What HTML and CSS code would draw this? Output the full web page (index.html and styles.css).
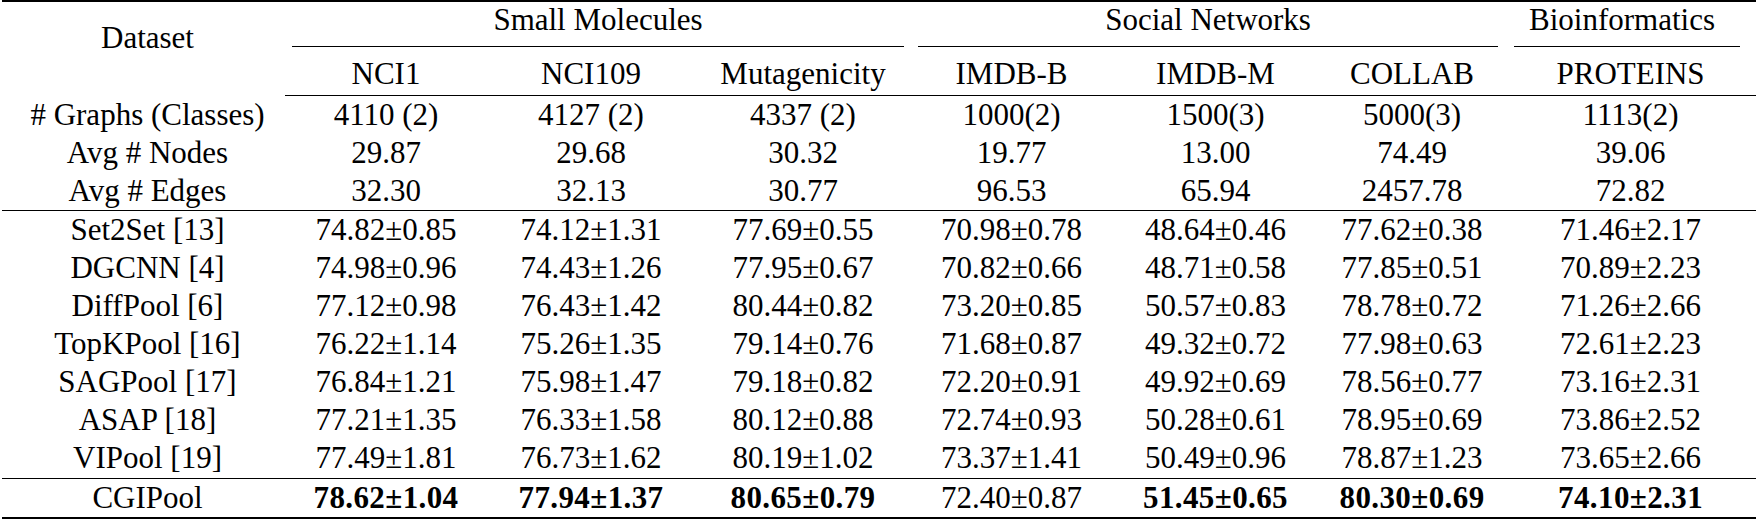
FILE: index.html
```html
<!DOCTYPE html>
<html>
<head>
<meta charset="utf-8">
<link rel="stylesheet" href="styles.css">
</head>
<body>
<table class="tbl">
  <colgroup>
    <col class="c0"><col class="c1"><col class="c2"><col class="c3"><col class="c4"><col class="c5"><col class="c6"><col class="c7">
  </colgroup>
  <tr class="h1">
    <td rowspan="2" class="ds">Dataset</td>
    <td colspan="3"><div class="grp">Small Molecules</div></td>
    <td colspan="3"><div class="grp">Social Networks</div></td>
    <td><div class="grp bio">Bioinformatics</div></td>
  </tr>
  <tr class="h2">
    <td>NCI1</td><td>NCI109</td><td>Mutagenicity</td><td>IMDB-B</td><td>IMDB-M</td><td>COLLAB</td><td>PROTEINS</td>
  </tr>
  <tr class="r">
    <td class="name">#&nbsp;Graphs (Classes)</td><td>4110 (2)</td><td>4127 (2)</td><td>4337 (2)</td><td>1000(2)</td><td>1500(3)</td><td>5000(3)</td><td>1113(2)</td>
  </tr>
  <tr class="r">
    <td class="name">Avg # Nodes</td><td>29.87</td><td>29.68</td><td>30.32</td><td>19.77</td><td>13.00</td><td>74.49</td><td>39.06</td>
  </tr>
  <tr class="r rule">
    <td class="name">Avg # Edges</td><td>32.30</td><td>32.13</td><td>30.77</td><td>96.53</td><td>65.94</td><td>2457.78</td><td>72.82</td>
  </tr>
  <tr class="r">
    <td class="name">Set2Set [13]</td><td>74.82±0.85</td><td>74.12±1.31</td><td>77.69±0.55</td><td>70.98±0.78</td><td>48.64±0.46</td><td>77.62±0.38</td><td>71.46±2.17</td>
  </tr>
  <tr class="r">
    <td class="name">DGCNN [4]</td><td>74.98±0.96</td><td>74.43±1.26</td><td>77.95±0.67</td><td>70.82±0.66</td><td>48.71±0.58</td><td>77.85±0.51</td><td>70.89±2.23</td>
  </tr>
  <tr class="r">
    <td class="name">DiffPool [6]</td><td>77.12±0.98</td><td>76.43±1.42</td><td>80.44±0.82</td><td>73.20±0.85</td><td>50.57±0.83</td><td>78.78±0.72</td><td>71.26±2.66</td>
  </tr>
  <tr class="r">
    <td class="name">TopKPool [16]</td><td>76.22±1.14</td><td>75.26±1.35</td><td>79.14±0.76</td><td>71.68±0.87</td><td>49.32±0.72</td><td>77.98±0.63</td><td>72.61±2.23</td>
  </tr>
  <tr class="r">
    <td class="name">SAGPool [17]</td><td>76.84±1.21</td><td>75.98±1.47</td><td>79.18±0.82</td><td>72.20±0.91</td><td>49.92±0.69</td><td>78.56±0.77</td><td>73.16±2.31</td>
  </tr>
  <tr class="r">
    <td class="name">ASAP [18]</td><td>77.21±1.35</td><td>76.33±1.58</td><td>80.12±0.88</td><td>72.74±0.93</td><td>50.28±0.61</td><td>78.95±0.69</td><td>73.86±2.52</td>
  </tr>
  <tr class="r rule tall">
    <td class="name">VIPool [19]</td><td>77.49±1.81</td><td>76.73±1.62</td><td>80.19±1.02</td><td>73.37±1.41</td><td>50.49±0.96</td><td>78.87±1.23</td><td>73.65±2.66</td>
  </tr>
  <tr class="r">
    <td class="name">CGIPool</td><td class="b">78.62±1.04</td><td class="b">77.94±1.37</td><td class="b">80.65±0.79</td><td>72.40±0.87</td><td class="b">51.45±0.65</td><td class="b">80.30±0.69</td><td class="b">74.10±2.31</td>
  </tr>
</table>
</body>
</html>
```

FILE: styles.css
```css
html, body {
  margin: 0;
  padding: 0;
  background: #fff;
}
.tbl {
  margin-left: 2px;
  width: 1754px;
  table-layout: fixed;
  border-collapse: separate;
  border-spacing: 0;
  border-top: 2px solid #000;
  border-bottom: 2px solid #000;
  font-family: "Liberation Serif", "Times New Roman", serif;
  font-size: 31px;
  color: #000;
}
.c0 { width: 283px; }
.c1 { width: 202px; }
.c2 { width: 208px; }
.c3 { width: 216px; }
.c4 { width: 201px; }
.c5 { width: 207px; }
.c6 { width: 186px; }
.c7 { width: 251px; }
.tbl td {
  padding: 0;
  text-align: center;
  line-height: 38px;
  white-space: nowrap;
}
.h1 td {
  vertical-align: top;
  height: 45px;
}
.h1 td.ds {
  padding-top: 17px;
  padding-left: 8px;
  vertical-align: top;
}
.grp {
  height: 45px;
  box-sizing: border-box;
  margin: 0 7px;
  line-height: 36px;
  border-bottom: 1px solid #000;
}
.grp.bio {
  margin: 0 16px 0 9px;
  padding-right: 10px;
}
.h2 td {
  height: 49px;
  box-sizing: border-box;
  vertical-align: top;
  padding-top: 8px;
  border-bottom: 1px solid #000;
}
.r td {
  height: 38px;
  box-sizing: border-box;
  vertical-align: middle;
}
.r td.name {
  padding-left: 8px;
}
.r.rule td {
  border-bottom: 1px solid #000;
}
.r.tall td {
  height: 40px;
  padding-bottom: 1px;
}
.b {
  font-weight: bold;
  letter-spacing: 0.4px;
}
```
